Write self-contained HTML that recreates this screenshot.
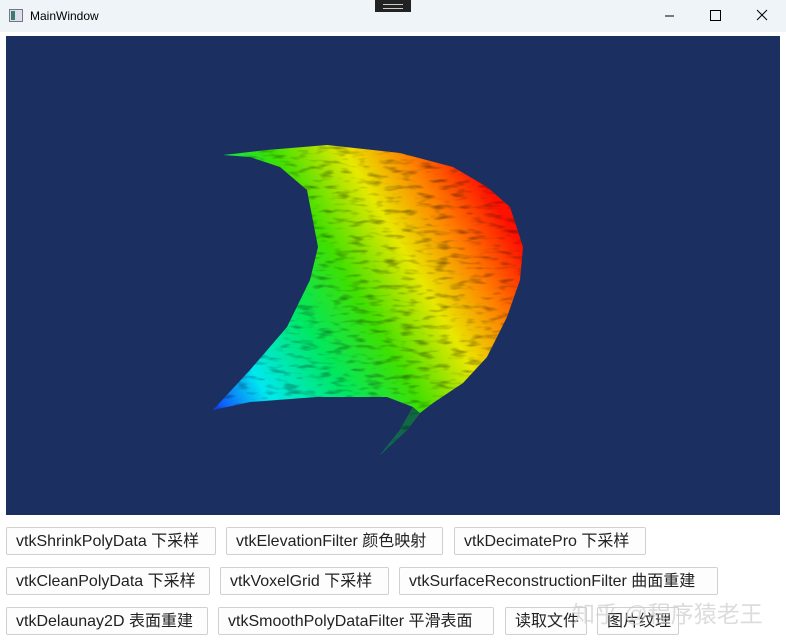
<!DOCTYPE html>
<html><head><meta charset="utf-8"><style>
body{margin:0;width:786px;height:643px;overflow:hidden;background:#fff;font-family:"Liberation Sans","Noto Sans CJK SC",sans-serif;position:relative}
.tb{position:absolute;left:0;top:0;width:786px;height:32px;background:#eef4f8}
.tt{position:absolute;left:30px;top:9px;font-size:12px;color:#000}
.ic{position:absolute;left:9px;top:9px;width:12px;height:11px;border:1px solid #777;background:#dde}
.ic:before{content:"";position:absolute;left:1px;top:1px;width:4px;height:9px;background:#3a7a70}
.grab{position:absolute;left:375px;top:0;width:36px;height:12px;background:#222}
.grab:before{content:"";position:absolute;left:8px;top:4px;width:20px;height:3px;border-top:1px solid #ccc;border-bottom:1px solid #ccc}
.cv{position:absolute;left:6px;top:36px;width:774px;height:479px;background:#1b3060}
.b{position:absolute;height:28px;border:1px solid #d0d0d0;border-radius:2px;background:#fdfdfd;font-size:16px;line-height:28px;color:#222;box-sizing:border-box;padding-left:9px;white-space:nowrap}
.wm{position:absolute;left:572px;top:595px;font-size:23px;color:rgba(205,205,205,.7)}
</style></head><body>
<div class="tb"><div class="ic"></div><div class="tt">MainWindow</div><div class="grab"></div>
<svg style="position:absolute;left:655px;top:0" width="131" height="32"><path d="M10 16h9" stroke="#000"/><rect x="55.5" y="10.5" width="10" height="10" fill="none" stroke="#000"/><path d="M102 10l10 10M112 10l-10 10" stroke="#000"/></svg></div>
<div class="cv"></div>
<svg style="position:absolute;left:0;top:0" width="786" height="520">
<defs><linearGradient id="g" gradientUnits="userSpaceOnUse" x1="215" y1="410" x2="515" y2="235">
<stop offset="0" stop-color="#1040ff"/><stop offset=".15" stop-color="#00e8f0"/><stop offset=".35" stop-color="#00e860"/><stop offset=".52" stop-color="#40e000"/><stop offset=".7" stop-color="#e8e800"/><stop offset=".85" stop-color="#ff8000"/><stop offset="1" stop-color="#ff1000"/></linearGradient>
<filter id="n"><feTurbulence type="fractalNoise" baseFrequency="0.06 0.2" numOctaves="2" seed="3"/><feColorMatrix values="0 0 0 0 0 0 0 0 0 0 0 0 0 0 0 0 0 0 -1 0.5"/><feComposite in2="SourceGraphic" operator="in"/></filter></defs>
<polygon fill="url(#g)" points="223,155 267,150 327,145 400,153 453,167 487,187 510,207 523,247 520,280 507,317 487,357 463,383 433,403 420,413 407,430 380,455 400,430 413,407 387,397 317,397 250,402 213,410 250,370 287,327 310,280 318,247 307,190 280,167 250,157"/>
<polygon fill="#0a4a50" opacity=".8" points="420,413 407,430 380,455 400,430 413,407"/>
<polygon filter="url(#n)" fill="#000" points="223,155 267,150 327,145 400,153 453,167 487,187 510,207 523,247 520,280 507,317 487,357 463,383 433,403 420,413 407,430 380,455 400,430 413,407 387,397 317,397 250,402 213,410 250,370 287,327 310,280 318,247 307,190 280,167 250,157"/>
</svg>
<div class="b" style="left:6px;top:527px;width:210px">vtkShrinkPolyData 下采样</div>
<div class="b" style="left:226px;top:527px;width:217px">vtkElevationFilter 颜色映射</div>
<div class="b" style="left:454px;top:527px;width:192px">vtkDecimatePro 下采样</div>
<div class="b" style="left:6px;top:567px;width:204px">vtkCleanPolyData 下采样</div>
<div class="b" style="left:220px;top:567px;width:169px">vtkVoxelGrid 下采样</div>
<div class="b" style="left:399px;top:567px;width:319px">vtkSurfaceReconstructionFilter 曲面重建</div>
<div class="b" style="left:6px;top:607px;width:202px">vtkDelaunay2D 表面重建</div>
<div class="b" style="left:218px;top:607px;width:276px">vtkSmoothPolyDataFilter 平滑表面</div>
<div class="b" style="left:505px;top:607px;width:82px">读取文件</div>
<div class="b" style="left:597px;top:607px;width:82px">图片纹理</div>
<div class="wm">知乎 @程序猿老王</div>
</body></html>
